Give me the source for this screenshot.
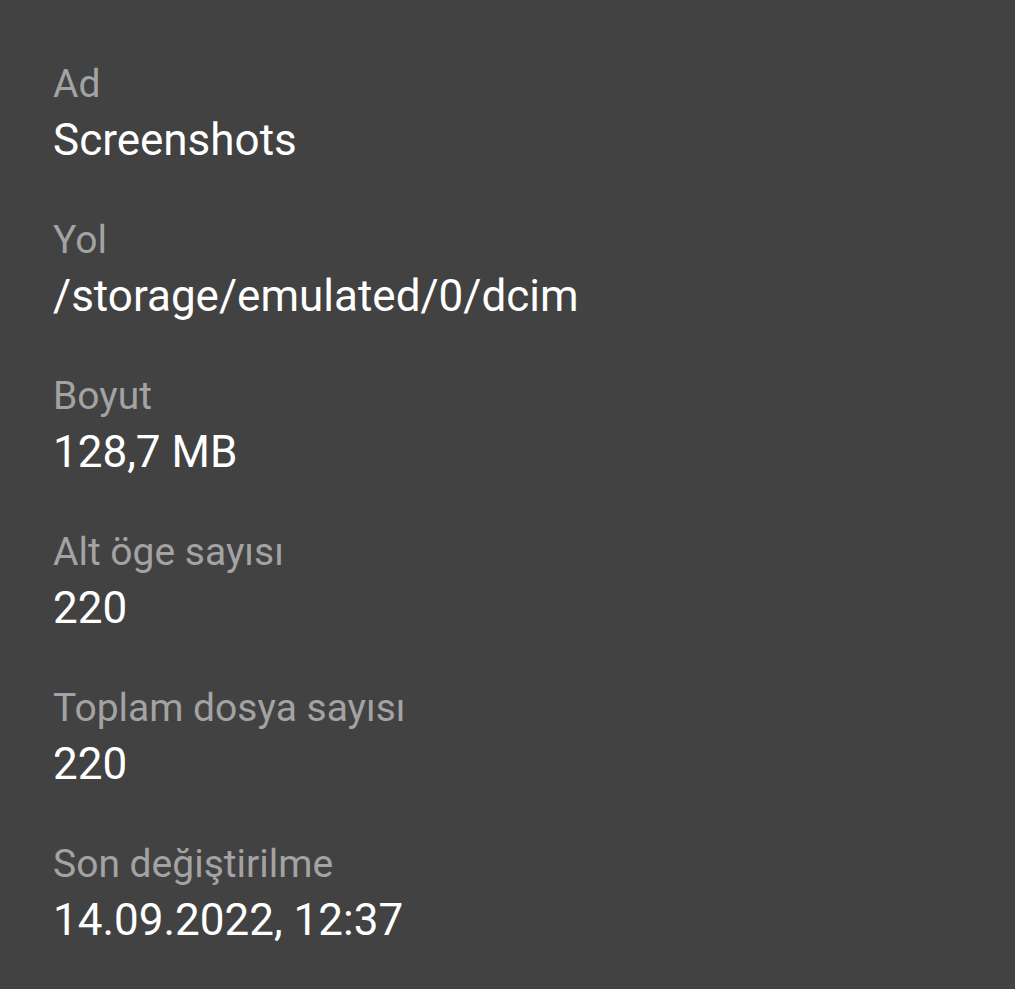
export default function App() {
  const items = [
    ["Ad", "Screenshots"],
    ["Yol", "/storage/emulated/0/dcim"],
    ["Boyut", "128,7 MB"],
    ["Alt öge sayısı", "220"],
    ["Toplam dosya sayısı", "220"],
    ["Son değiştirilme", "14.09.2022, 12:37"],
  ];
  return (
    <div className="w-[1015px] h-[989px] bg-[#424242] pt-[54px] pl-[53px]" style={{ fontFamily: "Roboto, sans-serif" }}>
      {items.map(([l, v]) => (
        <div key={l} className="h-[156px]">
          <div className="text-[39px] leading-[60px] text-[#a3a3a3]">{l}</div>
          <div className="text-[44px] leading-[52px] text-white">{v}</div>
        </div>
      ))}
    </div>
  );
}
